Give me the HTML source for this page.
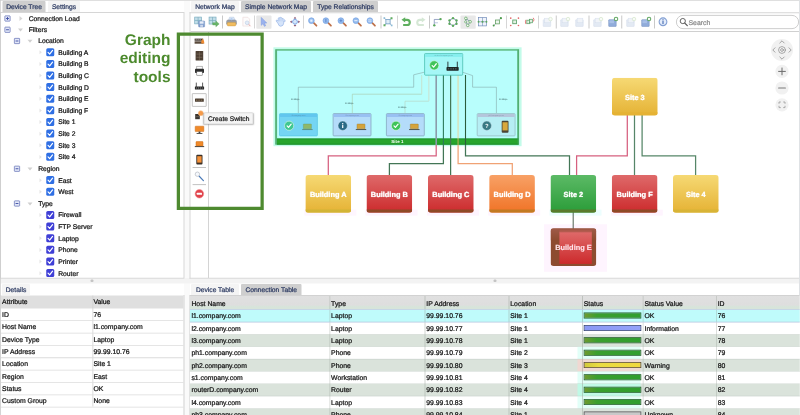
<!DOCTYPE html>
<html lang="en"><head><meta charset="utf-8"><title>Network Monitoring</title>
<style>
html,body{margin:0;padding:0;}
body{width:800px;height:415px;overflow:hidden;background:#fff;position:relative;font-family:"Liberation Sans",sans-serif;font-size:6.7px;color:#151515;text-rendering:geometricPrecision;}
#outer{left:0;top:0;width:3200px;height:1660px;transform:scale(0.25);transform-origin:0 0;filter:blur(1.3px);}
#root{left:0;top:0;width:3200px;height:1660px;overflow:hidden;}
div{position:absolute;box-sizing:border-box;}
.t{height:40px;line-height:40px;white-space:nowrap;font-size:27px;-webkit-text-stroke:0.96px currentColor;}
.tab{height:44px;line-height:45.6px;font-size:26.8px;color:#2a3860;white-space:nowrap;text-align:center;border-radius:4px 4px 0 0;-webkit-text-stroke:0.88px currentColor;}
.tabbg{height:44px;border-radius:4px 4px 0 0;}
.tabbg.g{background:#cecece;}
.tabbg.l{background:#f4f4f4;}
svg{position:absolute;left:0;top:0;overflow:visible;}
.cb{width:32px;height:32px;border-radius:6px;background:#2f6fe4;}
.cb.v{background:#3f3fd6;}
.ex{width:22px;height:22px;border:3.2px solid #5a68b8;border-radius:4px;background:#e4e9fb;}
</style></head><body><div id="outer"><div id="root">

<div style="left:0px;top:0px;width:3200px;height:3.2px;background:#d4d4d4"></div>
<div style="left:736px;top:4px;width:24px;height:1656px;background:#fafafa"></div>
<div style="left:0px;top:1112px;width:3200px;height:22px;background:#f3f3f3"></div>
<div style="left:0px;top:48px;width:738px;height:1066.8px;border:4px solid #d6d6d6;background:#fff"></div>
<div style="left:758px;top:48.8px;width:2442.8px;height:1066px;border:4px solid #d6d6d6;border-right:4px solid #dde0e3;background:#fff"></div>
<div class="tabbg g" style="left:10px;top:4px;width:172px;"></div><div class="tab" style="left:10px;top:4px;width:172px;">Device Tree</div>
<div class="tabbg l" style="left:192px;top:4px;width:128px;"></div><div class="tab" style="left:192px;top:4px;width:128px;">Settings</div>
<div class="tabbg l" style="left:764px;top:4px;width:192px;"></div><div class="tab" style="left:764px;top:4px;width:192px;">Network Map</div>
<div class="tabbg g" style="left:964px;top:4px;width:280px;"></div><div class="tab" style="left:964px;top:4px;width:280px;">Simple Network Map</div>
<div class="tabbg g" style="left:1252px;top:4px;width:260px;"></div><div class="tab" style="left:1252px;top:4px;width:260px;">Type Relationships</div>
<div id="tree" style="left:4px;top:52px;width:732px;height:1058px;overflow:hidden;">
<svg width="24" height="24" viewBox="0 0 5.8 5.8" style="left:14.4px;top:10.4px"><rect x="0.35" y="0.35" width="5.1" height="5.1" rx="0.5" fill="#e3e8f8" stroke="#6472b4" stroke-width="0.7"/><path d="M1.5 2.9H4.3" stroke="#3f4fa6" stroke-width="0.9"/><path d="M2.9 1.5V4.3" stroke="#3f4fa6" stroke-width="0.9"/></svg>
<svg viewBox="0 0 4 5" width="16" height="20" style="left:72px;top:12px"><path d="M0.5 0 L3.5 2.5 L0.5 5Z" fill="#d6d6d6"/></svg>
<div class="t" style="left:110.8px;top:2px;">Connection Load</div>
<svg width="24" height="24" viewBox="0 0 5.8 5.8" style="left:14.4px;top:54.8px"><rect x="0.35" y="0.35" width="5.1" height="5.1" rx="0.5" fill="#e3e8f8" stroke="#6472b4" stroke-width="0.7"/><path d="M1.5 2.9H4.3" stroke="#3f4fa6" stroke-width="0.9"/></svg>
<svg viewBox="0 0 5 4" width="20" height="16" style="left:68px;top:60.4px"><path d="M0 0.5 L5 0.5 L2.5 3.5Z" fill="#d0d0d0"/></svg>
<div class="t" style="left:110.8px;top:46.4px;">Filters</div>
<svg width="24" height="24" viewBox="0 0 5.8 5.8" style="left:52.4px;top:99.6px"><rect x="0.35" y="0.35" width="5.1" height="5.1" rx="0.5" fill="#e3e8f8" stroke="#6472b4" stroke-width="0.7"/><path d="M1.5 2.9H4.3" stroke="#3f4fa6" stroke-width="0.9"/></svg>
<svg viewBox="0 0 5 4" width="20" height="16" style="left:106px;top:105.2px"><path d="M0 0.5 L5 0.5 L2.5 3.5Z" fill="#d0d0d0"/></svg>
<div class="t" style="left:148.8px;top:91.2px;">Location</div>
<svg viewBox="0 0 3 4" width="12" height="16" style="left:152px;top:149.44px"><path d="M0.5 0 L2.8 2 L0.5 4Z" fill="#e4e4e4"/></svg>
<div class="cb" style="left:181.2px;top:141.04px;"><svg width="32" height="32" viewBox="0 0 8 8"><path d="M1.8 4.2 L3.4 5.8 L6.3 2.2" fill="none" stroke="#fff" stroke-width="1.2" stroke-linecap="round" stroke-linejoin="round"/></svg></div>
<div class="t" style="left:228.8px;top:137.44px;">Building A</div>
<svg viewBox="0 0 3 4" width="12" height="16" style="left:152px;top:195.92px"><path d="M0.5 0 L2.8 2 L0.5 4Z" fill="#e4e4e4"/></svg>
<div class="cb" style="left:181.2px;top:187.52px;"><svg width="32" height="32" viewBox="0 0 8 8"><path d="M1.8 4.2 L3.4 5.8 L6.3 2.2" fill="none" stroke="#fff" stroke-width="1.2" stroke-linecap="round" stroke-linejoin="round"/></svg></div>
<div class="t" style="left:228.8px;top:183.92px;">Building B</div>
<svg viewBox="0 0 3 4" width="12" height="16" style="left:152px;top:242.4px"><path d="M0.5 0 L2.8 2 L0.5 4Z" fill="#e4e4e4"/></svg>
<div class="cb" style="left:181.2px;top:234px;"><svg width="32" height="32" viewBox="0 0 8 8"><path d="M1.8 4.2 L3.4 5.8 L6.3 2.2" fill="none" stroke="#fff" stroke-width="1.2" stroke-linecap="round" stroke-linejoin="round"/></svg></div>
<div class="t" style="left:228.8px;top:230.4px;">Building C</div>
<svg viewBox="0 0 3 4" width="12" height="16" style="left:152px;top:288.88px"><path d="M0.5 0 L2.8 2 L0.5 4Z" fill="#e4e4e4"/></svg>
<div class="cb" style="left:181.2px;top:280.48px;"><svg width="32" height="32" viewBox="0 0 8 8"><path d="M1.8 4.2 L3.4 5.8 L6.3 2.2" fill="none" stroke="#fff" stroke-width="1.2" stroke-linecap="round" stroke-linejoin="round"/></svg></div>
<div class="t" style="left:228.8px;top:276.88px;">Building D</div>
<svg viewBox="0 0 3 4" width="12" height="16" style="left:152px;top:335.36px"><path d="M0.5 0 L2.8 2 L0.5 4Z" fill="#e4e4e4"/></svg>
<div class="cb" style="left:181.2px;top:326.96px;"><svg width="32" height="32" viewBox="0 0 8 8"><path d="M1.8 4.2 L3.4 5.8 L6.3 2.2" fill="none" stroke="#fff" stroke-width="1.2" stroke-linecap="round" stroke-linejoin="round"/></svg></div>
<div class="t" style="left:228.8px;top:323.36px;">Building E</div>
<svg viewBox="0 0 3 4" width="12" height="16" style="left:152px;top:381.84px"><path d="M0.5 0 L2.8 2 L0.5 4Z" fill="#e4e4e4"/></svg>
<div class="cb" style="left:181.2px;top:373.44px;"><svg width="32" height="32" viewBox="0 0 8 8"><path d="M1.8 4.2 L3.4 5.8 L6.3 2.2" fill="none" stroke="#fff" stroke-width="1.2" stroke-linecap="round" stroke-linejoin="round"/></svg></div>
<div class="t" style="left:228.8px;top:369.84px;">Building F</div>
<svg viewBox="0 0 3 4" width="12" height="16" style="left:152px;top:428.32px"><path d="M0.5 0 L2.8 2 L0.5 4Z" fill="#e4e4e4"/></svg>
<div class="cb" style="left:181.2px;top:419.92px;"><svg width="32" height="32" viewBox="0 0 8 8"><path d="M1.8 4.2 L3.4 5.8 L6.3 2.2" fill="none" stroke="#fff" stroke-width="1.2" stroke-linecap="round" stroke-linejoin="round"/></svg></div>
<div class="t" style="left:228.8px;top:416.32px;">Site 1</div>
<svg viewBox="0 0 3 4" width="12" height="16" style="left:152px;top:474.8px"><path d="M0.5 0 L2.8 2 L0.5 4Z" fill="#e4e4e4"/></svg>
<div class="cb" style="left:181.2px;top:466.4px;"><svg width="32" height="32" viewBox="0 0 8 8"><path d="M1.8 4.2 L3.4 5.8 L6.3 2.2" fill="none" stroke="#fff" stroke-width="1.2" stroke-linecap="round" stroke-linejoin="round"/></svg></div>
<div class="t" style="left:228.8px;top:462.8px;">Site 2</div>
<svg viewBox="0 0 3 4" width="12" height="16" style="left:152px;top:521.28px"><path d="M0.5 0 L2.8 2 L0.5 4Z" fill="#e4e4e4"/></svg>
<div class="cb" style="left:181.2px;top:512.88px;"><svg width="32" height="32" viewBox="0 0 8 8"><path d="M1.8 4.2 L3.4 5.8 L6.3 2.2" fill="none" stroke="#fff" stroke-width="1.2" stroke-linecap="round" stroke-linejoin="round"/></svg></div>
<div class="t" style="left:228.8px;top:509.28px;">Site 3</div>
<svg viewBox="0 0 3 4" width="12" height="16" style="left:152px;top:567.76px"><path d="M0.5 0 L2.8 2 L0.5 4Z" fill="#e4e4e4"/></svg>
<div class="cb" style="left:181.2px;top:559.36px;"><svg width="32" height="32" viewBox="0 0 8 8"><path d="M1.8 4.2 L3.4 5.8 L6.3 2.2" fill="none" stroke="#fff" stroke-width="1.2" stroke-linecap="round" stroke-linejoin="round"/></svg></div>
<div class="t" style="left:228.8px;top:555.76px;">Site 4</div>
<svg width="24" height="24" viewBox="0 0 5.8 5.8" style="left:52.4px;top:610.64px"><rect x="0.35" y="0.35" width="5.1" height="5.1" rx="0.5" fill="#e3e8f8" stroke="#6472b4" stroke-width="0.7"/><path d="M1.5 2.9H4.3" stroke="#3f4fa6" stroke-width="0.9"/></svg>
<svg viewBox="0 0 5 4" width="20" height="16" style="left:106px;top:616.24px"><path d="M0 0.5 L5 0.5 L2.5 3.5Z" fill="#d0d0d0"/></svg>
<div class="t" style="left:148.8px;top:602.24px;">Region</div>
<svg viewBox="0 0 3 4" width="12" height="16" style="left:152px;top:660.72px"><path d="M0.5 0 L2.8 2 L0.5 4Z" fill="#e4e4e4"/></svg>
<div class="cb" style="left:181.2px;top:652.32px;"><svg width="32" height="32" viewBox="0 0 8 8"><path d="M1.8 4.2 L3.4 5.8 L6.3 2.2" fill="none" stroke="#fff" stroke-width="1.2" stroke-linecap="round" stroke-linejoin="round"/></svg></div>
<div class="t" style="left:228.8px;top:648.72px;">East</div>
<svg viewBox="0 0 3 4" width="12" height="16" style="left:152px;top:707.2px"><path d="M0.5 0 L2.8 2 L0.5 4Z" fill="#e4e4e4"/></svg>
<div class="cb" style="left:181.2px;top:698.8px;"><svg width="32" height="32" viewBox="0 0 8 8"><path d="M1.8 4.2 L3.4 5.8 L6.3 2.2" fill="none" stroke="#fff" stroke-width="1.2" stroke-linecap="round" stroke-linejoin="round"/></svg></div>
<div class="t" style="left:228.8px;top:695.2px;">West</div>
<svg width="24" height="24" viewBox="0 0 5.8 5.8" style="left:52.4px;top:750.08px"><rect x="0.35" y="0.35" width="5.1" height="5.1" rx="0.5" fill="#e3e8f8" stroke="#6472b4" stroke-width="0.7"/><path d="M1.5 2.9H4.3" stroke="#3f4fa6" stroke-width="0.9"/></svg>
<svg viewBox="0 0 5 4" width="20" height="16" style="left:106px;top:755.68px"><path d="M0 0.5 L5 0.5 L2.5 3.5Z" fill="#d0d0d0"/></svg>
<div class="t" style="left:148.8px;top:741.68px;">Type</div>
<svg viewBox="0 0 3 4" width="12" height="16" style="left:152px;top:800.16px"><path d="M0.5 0 L2.8 2 L0.5 4Z" fill="#e4e4e4"/></svg>
<div class="cb v" style="left:181.2px;top:791.76px;"><svg width="32" height="32" viewBox="0 0 8 8"><path d="M1.8 4.2 L3.4 5.8 L6.3 2.2" fill="none" stroke="#fff" stroke-width="1.2" stroke-linecap="round" stroke-linejoin="round"/></svg></div>
<div class="t" style="left:228.8px;top:788.16px;">Firewall</div>
<svg viewBox="0 0 3 4" width="12" height="16" style="left:152px;top:846.64px"><path d="M0.5 0 L2.8 2 L0.5 4Z" fill="#e4e4e4"/></svg>
<div class="cb v" style="left:181.2px;top:838.24px;"><svg width="32" height="32" viewBox="0 0 8 8"><path d="M1.8 4.2 L3.4 5.8 L6.3 2.2" fill="none" stroke="#fff" stroke-width="1.2" stroke-linecap="round" stroke-linejoin="round"/></svg></div>
<div class="t" style="left:228.8px;top:834.64px;">FTP Server</div>
<svg viewBox="0 0 3 4" width="12" height="16" style="left:152px;top:893.12px"><path d="M0.5 0 L2.8 2 L0.5 4Z" fill="#e4e4e4"/></svg>
<div class="cb v" style="left:181.2px;top:884.72px;"><svg width="32" height="32" viewBox="0 0 8 8"><path d="M1.8 4.2 L3.4 5.8 L6.3 2.2" fill="none" stroke="#fff" stroke-width="1.2" stroke-linecap="round" stroke-linejoin="round"/></svg></div>
<div class="t" style="left:228.8px;top:881.12px;">Laptop</div>
<svg viewBox="0 0 3 4" width="12" height="16" style="left:152px;top:939.6px"><path d="M0.5 0 L2.8 2 L0.5 4Z" fill="#e4e4e4"/></svg>
<div class="cb v" style="left:181.2px;top:931.2px;"><svg width="32" height="32" viewBox="0 0 8 8"><path d="M1.8 4.2 L3.4 5.8 L6.3 2.2" fill="none" stroke="#fff" stroke-width="1.2" stroke-linecap="round" stroke-linejoin="round"/></svg></div>
<div class="t" style="left:228.8px;top:927.6px;">Phone</div>
<svg viewBox="0 0 3 4" width="12" height="16" style="left:152px;top:986.08px"><path d="M0.5 0 L2.8 2 L0.5 4Z" fill="#e4e4e4"/></svg>
<div class="cb v" style="left:181.2px;top:977.68px;"><svg width="32" height="32" viewBox="0 0 8 8"><path d="M1.8 4.2 L3.4 5.8 L6.3 2.2" fill="none" stroke="#fff" stroke-width="1.2" stroke-linecap="round" stroke-linejoin="round"/></svg></div>
<div class="t" style="left:228.8px;top:974.08px;">Printer</div>
<svg viewBox="0 0 3 4" width="12" height="16" style="left:152px;top:1032.56px"><path d="M0.5 0 L2.8 2 L0.5 4Z" fill="#e4e4e4"/></svg>
<div class="cb v" style="left:181.2px;top:1024.16px;"><svg width="32" height="32" viewBox="0 0 8 8"><path d="M1.8 4.2 L3.4 5.8 L6.3 2.2" fill="none" stroke="#fff" stroke-width="1.2" stroke-linecap="round" stroke-linejoin="round"/></svg></div>
<div class="t" style="left:228.8px;top:1020.56px;">Router</div>
</div>
<div style="left:0.8px;top:0px;width:3.2px;height:1660px;background:#cdcdcd"></div>
<div style="left:3196.4px;top:0px;width:3.6px;height:1180px;background:#dfe2e5"></div>
<div style="left:362px;top:1118px;width:12px;height:10px;background:#c4c4c4;border-radius:4px"></div>
<div style="left:1974px;top:1118px;width:12px;height:10px;background:#c4c4c4;border-radius:4px"></div>
<div style="left:400px;top:121.2px;width:282px;text-align:right;font-weight:bold;font-size:62px;line-height:74.8px;color:#4c8a2d;">Graph<br>editing<br>tools</div>
<div style="left:762px;top:124px;width:2433.6px;height:3.6px;background:#d0d0d0"></div>
<div style="left:888px;top:62px;width:3.6px;height:52px;background:#c9c9c9"></div>
<div style="left:1015.6px;top:62px;width:3.6px;height:52px;background:#c9c9c9"></div>
<div style="left:1212.8px;top:62px;width:3.6px;height:52px;background:#c9c9c9"></div>
<div style="left:1522.4px;top:62px;width:3.6px;height:52px;background:#c9c9c9"></div>
<div style="left:1588.8px;top:62px;width:3.6px;height:52px;background:#c9c9c9"></div>
<div style="left:1716.4px;top:62px;width:3.6px;height:52px;background:#c9c9c9"></div>
<div style="left:2024.8px;top:62px;width:3.6px;height:52px;background:#c9c9c9"></div>
<div style="left:2152.8px;top:62px;width:3.6px;height:52px;background:#c9c9c9"></div>
<div style="left:2223.2px;top:62px;width:3.6px;height:52px;background:#c9c9c9"></div>
<div style="left:2354.4px;top:62px;width:3.6px;height:52px;background:#c9c9c9"></div>
<div style="left:2485.4px;top:62px;width:3.6px;height:52px;background:#c9c9c9"></div>
<div style="left:2616.4px;top:62px;width:3.6px;height:52px;background:#c9c9c9"></div>
<div style="left:1024.8px;top:62.4px;width:61.6px;height:52.8px;background:#e8e8e8;border-radius:4px"></div>
<div style="left:1842.4px;top:62.4px;width:60.8px;height:52.8px;background:#e8e8e8;border-radius:4px"></div>
<svg id="tbicons" width="3200" height="128" viewBox="0 0 800 32" opacity="0.86">
<g transform="translate(194.34,16.7) scale(0.92)"><rect x="0.4" y="0.4" width="7.4" height="7.4" fill="#b9d9e6" stroke="#5f9bb0" stroke-width="0.7"/><path d="M0.4 4.1H7.8M4.1 0.4V7.8" stroke="#5f9bb0" stroke-width="0.7"/><rect x="4.6" y="4.6" width="6.6" height="6.6" rx="0.7" fill="#7092c8" stroke="#5577b0" stroke-width="0.5"/><rect x="5.8" y="5" width="4.2" height="2.6" fill="#e4ecf8"/><rect x="6.4" y="8.8" width="3" height="2.2" fill="#c4d2ea"/></g>
<g transform="translate(208.69,16.7) scale(0.92)"><rect x="0.4" y="0.4" width="7.6" height="7.6" fill="#b9d9e6" stroke="#5f9bb0" stroke-width="0.7"/><path d="M0.4 4.2H8M4.2 0.4V8" stroke="#5f9bb0" stroke-width="0.7"/><path d="M4.4 6.6H7.8V4.6L11.4 7.8L7.8 11V9H4.4Z" fill="#52aa52" stroke="#3c8c3c" stroke-width="0.4"/></g>
<g transform="translate(226.19,16.7) scale(0.92)"><path d="M2.6 3.8L3.6 0.6H8.4L9.4 3.8Z" fill="#dbe8f8" stroke="#9ab2d6" stroke-width="0.5"/><path d="M0.4 5.4Q0.4 3.6 2 3.6H9.8Q11.2 3.6 11.2 5.4V8.2H0.4Z" fill="#8b8f98" stroke="#6f737c" stroke-width="0.5"/><rect x="1.2" y="6.2" width="9.2" height="3.8" rx="0.8" fill="#f0b244" stroke="#c48a26" stroke-width="0.5"/><circle cx="5.8" cy="2.6" r="1.3" fill="#a9c6ee"/></g>
<g transform="translate(241.19,16.7) scale(0.92)"><path d="M1.8 0.6H7.2L9.2 2.6V10.2H1.8Z" fill="#fdfbfb" stroke="#e6cccc" stroke-width="0.6"/><circle cx="6.4" cy="6.6" r="2" fill="#dfeaf8" stroke="#b4c6e0" stroke-width="0.7"/><path d="M8 8.2L10.2 10.4" stroke="#e09a9a" stroke-width="1"/></g>
<g transform="translate(257.94,16.7) scale(0.92)"><path d="M3.6 0.8V9.4L5.6 7.5L7 10.5L8.4 9.8L7 6.9H9.6Z" fill="#8eaaf0" stroke="#6c8de0" stroke-width="0.6" stroke-linejoin="round"/></g>
<g transform="translate(275.44,16.7) scale(0.92)"><path d="M2.6 7L0.8 4.8Q0.4 3.8 1.6 3.7L3 4.9V1.7Q3.7 0.8 4.4 1.7V1Q5.2 0.2 5.9 1V1.4Q6.7 0.7 7.4 1.5V2.3Q8.3 1.7 8.9 2.6L10.6 4.2Q11 5 10.2 5.3L9 4.6V7Q8.8 10 5.8 10.4Q3.4 10.2 2.6 7Z" fill="#cfe0fa" stroke="#7fa2e0" stroke-width="0.7" stroke-linejoin="round"/><path d="M4.4 2V5M5.9 1.6V5M7.4 2.2V5" stroke="#9ab6ea" stroke-width="0.5"/></g>
<g transform="translate(289.94,16.7) scale(0.92)"><path d="M5.5 1.5V9.5M1.5 5.5H9.5" stroke="#6f9ae0" stroke-width="1"/><circle cx="5.5" cy="5.5" r="2.6" fill="#cfe2fa" stroke="#5f92dc" stroke-width="0.9"/><path d="M5.5 0L7 2H4ZM5.5 11L7 9H4ZM0 5.5L2 4V7ZM11 5.5L9 4V7Z" fill="#7a3a58"/></g>
<g transform="translate(307.44,16.7) scale(0.92)"><path d="M6.8 6.8L9.8 9.8" stroke="#b45a2c" stroke-width="1.9" stroke-linecap="round"/><circle cx="4.3" cy="4.3" r="3.1" fill="#86b2ec" stroke="#5b90dc" stroke-width="0.7"/><rect x="3.1" y="3.1" width="2.4" height="2.4" fill="#e2eefc"/></g>
<g transform="translate(321.94,16.7) scale(0.92)"><path d="M6.8 6.8L9.8 9.8" stroke="#b45a2c" stroke-width="1.9" stroke-linecap="round"/><circle cx="4.3" cy="4.3" r="3.1" fill="#86b2ec" stroke="#5b90dc" stroke-width="0.7"/><rect x="3.8" y="2.4" width="1" height="3.8" fill="#3f6fc0"/></g>
<g transform="translate(336.94,16.7) scale(0.92)"><path d="M6.8 6.8L9.8 9.8" stroke="#b45a2c" stroke-width="1.9" stroke-linecap="round"/><circle cx="4.3" cy="4.3" r="3.1" fill="#86b2ec" stroke="#5b90dc" stroke-width="0.7"/><path d="M2.8 4.3H5.8M4.3 2.8V5.8" stroke="#3f6fc0" stroke-width="0.9"/></g>
<g transform="translate(351.94,16.7) scale(0.92)"><path d="M6.8 6.8L9.8 9.8" stroke="#b45a2c" stroke-width="1.9" stroke-linecap="round"/><circle cx="4.3" cy="4.3" r="3.1" fill="#86b2ec" stroke="#5b90dc" stroke-width="0.7"/><path d="M2.6 4.3H6" stroke="#e6effd" stroke-width="1.1"/></g>
<g transform="translate(365.94,16.7) scale(0.92)"><path d="M6.8 6.8L9.8 9.8" stroke="#b45a2c" stroke-width="1.9" stroke-linecap="round"/><circle cx="4.3" cy="4.3" r="3.1" fill="#86b2ec" stroke="#5b90dc" stroke-width="0.7"/><path d="M2.4 3.4H6.2M2.4 5.2H6.2M3.4 2.4V6.2M5.2 2.4V6.2" stroke="#d6e4fb" stroke-width="0.5"/></g>
<g transform="translate(382.94,16.7) scale(0.92)"><path d="M1.2 9.8L9.8 1.2M1.2 1.2L9.8 9.8" stroke="#5f8fb8" stroke-width="0.8"/><rect x="3.2" y="3.2" width="4.6" height="4.6" fill="#dcebf6" stroke="#4f86b4" stroke-width="0.8"/><rect x="8.2" y="0.6" width="2.2" height="2.2" fill="#46a046"/><rect x="0.6" y="8.2" width="2.2" height="2.2" fill="#46a046"/><rect x="0.6" y="0.6" width="1.8" height="1.8" fill="#7ab0d0"/><rect x="8.6" y="8.6" width="1.8" height="1.8" fill="#7ab0d0"/></g>
<g transform="translate(400.94,16.7) scale(0.92)"><path d="M3.4 3.4H6.6Q9.6 3.4 9.6 6.2Q9.6 9 6.6 9H2.4" fill="none" stroke="#45a345" stroke-width="2.3" stroke-linejoin="round"/><path d="M4.6 0.6L0.6 3.4L4.6 6.2Z" fill="#45a345"/></g>
<g transform="translate(415.94,16.7) scale(0.92)"><path d="M7.6 3.4H4.4Q1.4 3.4 1.4 6.2Q1.4 9 4.4 9H8.6" fill="none" stroke="#cfe4cf" stroke-width="2.3" stroke-linejoin="round"/><path d="M6.4 0.6L10.4 3.4L6.4 6.2Z" fill="#cfe4cf"/></g>
<g transform="translate(432.44,16.7) scale(0.92)"><path d="M2 9.5V3H8.3" fill="none" stroke="#4a5f9a" stroke-width="0.7"/><path d="M2 6.6H6" stroke="#8a9ac4" stroke-width="0.7"/><circle cx="8.8" cy="2.6" r="1.3" fill="#3f9a3f"/><circle cx="2" cy="9.4" r="1.3" fill="#3f9a3f"/></g>
<g transform="translate(447.94,16.7) scale(0.92)"><path d="M5.5 1.6L9.3 4V7.6L5.5 9.8L1.7 7.6V4Z" fill="none" stroke="#4a5f9a" stroke-width="0.8"/><circle cx="5.5" cy="1.6" r="1.3" fill="#3f9a3f"/><circle cx="9.3" cy="4" r="1.3" fill="#3f9a3f"/><circle cx="9.3" cy="7.6" r="1.3" fill="#3f9a3f"/><circle cx="5.5" cy="9.8" r="1.3" fill="#3f9a3f"/><circle cx="1.7" cy="7.6" r="1.3" fill="#3f9a3f"/><circle cx="1.7" cy="4" r="1.3" fill="#3f9a3f"/></g>
<g transform="translate(462.94,16.7) scale(0.92)"><path d="M3.2 1.8L7.8 5.5L5.2 9.4L3.2 5.6Z" fill="none" stroke="#4a5f9a" stroke-width="0.7"/><circle cx="3.2" cy="1.8" r="1.4" fill="#fff" stroke="#3f9a3f" stroke-width="0.8"/><circle cx="7.8" cy="5.5" r="1.4" fill="#fff" stroke="#3f9a3f" stroke-width="0.8"/><circle cx="5.2" cy="9.4" r="1.4" fill="#fff" stroke="#3f9a3f" stroke-width="0.8"/><circle cx="3" cy="5.6" r="1.2" fill="#fff" stroke="#3f9a3f" stroke-width="0.7"/></g>
<g transform="translate(477.44,16.7) scale(0.92)"><rect x="1" y="1" width="9" height="9" fill="#eef3fb" stroke="#4f6fa8" stroke-width="0.7"/><path d="M1 5.5H10M5.5 1V10" stroke="#4f6fa8" stroke-width="0.6"/><circle cx="5.5" cy="5.5" r="1.2" fill="#3f9a3f"/><circle cx="1.2" cy="5.5" r="1" fill="#3f9a3f"/><circle cx="9.8" cy="5.5" r="1" fill="#3f9a3f"/></g>
<g transform="translate(492.44,16.7) scale(0.92)"><path d="M1.5 9.5L8.5 2" stroke="#7a8ab0" stroke-width="0.6"/><rect x="3.4" y="3.6" width="4.2" height="4.2" fill="#e9f3e9" stroke="#3f8a3f" stroke-width="0.8"/><circle cx="9.2" cy="1.6" r="1.2" fill="#2f8a2f"/><circle cx="1.4" cy="9.6" r="1.1" fill="#2f8a2f"/></g>
<g transform="translate(509.44,16.7) scale(0.92)"><rect x="3.6" y="3.6" width="4" height="4" fill="#dff0df" stroke="#3f8f4f" stroke-width="0.9"/><g fill="#dc4a4a"><circle cx="1.4" cy="1.6" r="0.9"/><circle cx="9.8" cy="1.6" r="0.9"/><circle cx="1.4" cy="9.6" r="0.9"/><circle cx="9.8" cy="9.6" r="0.9"/></g></g>
<g transform="translate(524.44,16.7) scale(0.92)"><rect x="2.6" y="3.8" width="3.4" height="3.8" fill="#dff0df" stroke="#3f8f4f" stroke-width="0.8"/><rect x="5.4" y="2.8" width="3.2" height="3.8" fill="#dff0df" stroke="#3f8f4f" stroke-width="0.8"/><path d="M1.6 3.4Q0.4 5.6 1.6 8M9.6 1.2Q11 3 9.8 5.2" fill="none" stroke="#dc4a4a" stroke-width="0.9"/></g>
<g transform="translate(542.44,16.7) scale(0.92)"><rect x="0.8" y="3.2" width="8.2" height="7.4" rx="0.6" fill="#dfe7f3" stroke="#cdd7e8" stroke-width="0.6"/><rect x="2.4" y="1.6" width="6.2" height="5" fill="#eef2f8" stroke="#cdd7e8" stroke-width="0.5"/><circle cx="8.8" cy="2.6" r="1.9" fill="#f8fbf6" stroke="#cfe2c4" stroke-width="0.8"/></g>
<g transform="translate(559.94,16.7) scale(0.92)"><rect x="0.8" y="3.2" width="8.2" height="7.4" rx="0.6" fill="#dfe7f3" stroke="#cdd7e8" stroke-width="0.6"/><rect x="2.4" y="1.6" width="6.2" height="5" fill="#eef2f8" stroke="#cdd7e8" stroke-width="0.5"/><circle cx="8.8" cy="2.6" r="1.9" fill="#f8fbf6" stroke="#cfe2c4" stroke-width="0.8"/></g>
<g transform="translate(574.94,16.7) scale(0.92)"><rect x="0.8" y="3.2" width="8.2" height="7.4" rx="0.6" fill="#dfe7f3" stroke="#cdd7e8" stroke-width="0.6"/><rect x="2.4" y="1.6" width="6.2" height="5" fill="#eef2f8" stroke="#cdd7e8" stroke-width="0.5"/></g>
<g transform="translate(592.94,16.7) scale(0.92)"><rect x="0.8" y="3.2" width="8.2" height="7.4" rx="0.6" fill="#dfe7f3" stroke="#cdd7e8" stroke-width="0.6"/><rect x="2.4" y="1.6" width="6.2" height="5" fill="#eef2f8" stroke="#cdd7e8" stroke-width="0.5"/><circle cx="8.8" cy="2.6" r="1.9" fill="#f8fbf6" stroke="#cfe2c4" stroke-width="0.8"/></g>
<g transform="translate(607.94,16.7) scale(0.92)"><rect x="0.8" y="3.2" width="8.2" height="7.4" rx="0.6" fill="#7f9fd6" stroke="#6484b6" stroke-width="0.6"/><rect x="1.6" y="4" width="5" height="3" fill="#9ab6e4"/><circle cx="8.8" cy="2.6" r="1.9" fill="#f4faf4" stroke="#4a9a4a" stroke-width="1.1"/></g>
<g transform="translate(625.94,16.7) scale(0.92)"><rect x="0.8" y="3.2" width="8.2" height="7.4" rx="0.6" fill="#dfe7f3" stroke="#cdd7e8" stroke-width="0.6"/><rect x="2.4" y="1.6" width="6.2" height="5" fill="#eef2f8" stroke="#cdd7e8" stroke-width="0.5"/><circle cx="8.8" cy="2.6" r="1.9" fill="#f8fbf6" stroke="#cfe2c4" stroke-width="0.8"/></g>
<g transform="translate(640.94,16.7) scale(0.92)"><rect x="0.8" y="3.2" width="8.2" height="7.4" rx="0.6" fill="#7f9fd6" stroke="#6484b6" stroke-width="0.6"/><rect x="1.6" y="4" width="5" height="3" fill="#9ab6e4"/><circle cx="8.8" cy="2.6" r="1.9" fill="#f4faf4" stroke="#4a9a4a" stroke-width="1.1"/></g>
<g transform="translate(657.94,16.7) scale(0.92)"><circle cx="5.5" cy="5.5" r="4.2" fill="#dfe9fa" stroke="#6f90cc" stroke-width="1.2"/><rect x="4.8" y="4.7" width="1.4" height="3.3" fill="#3f66b0"/><rect x="4.8" y="2.8" width="1.4" height="1.3" fill="#3f66b0"/></g>
</svg>
<div style="left:2704px;top:60.4px;width:491.6px;height:55.6px;border:3.6px solid #bdbdbd;border-radius:28px;background:#fff;"></div>
<svg width="40" height="40" style="left:2716px;top:69.2px" viewBox="0 0 10 10"><circle cx="3.8" cy="3.8" r="2.6" fill="none" stroke="#555" stroke-width="0.9"/><path d="M5.8 5.8L8.3 8.3" stroke="#555" stroke-width="1.2" stroke-linecap="round"/></svg>
<div class="t" style="left:2754px;top:68.8px;color:#8c8c8c;font-size:27.6px">Search</div>
<div style="left:832px;top:128px;width:4px;height:984px;background:#d4d4d4"></div>
<svg id="palette" width="3200" height="1660" viewBox="0 0 800 415">
<g><rect x="194.6" y="38.6" width="8.6" height="2.2" fill="#4a4038"/><rect x="194.6" y="41.3" width="9" height="2.4" fill="#5a4a3c"/><path d="M201.2 43.6Q201 40.6 202.6 38.4Q204.6 41 204.4 43.6Z" fill="#f08a30"/><path d="M195.6 39.7h1.2m0.8 0h1.2m0.8 0h1.2" stroke="#b9b0a6" stroke-width="0.7"/></g>
<g><rect x="195.6" y="51" width="7.6" height="9.6" rx="0.5" fill="#4d3f33"/><path d="M196.4 54.1H202.4M196.4 57.3H202.4M199.4 51.6V60" stroke="#8a7a68" stroke-width="0.5"/></g>
<g><rect x="196.8" y="66.2" width="5.4" height="3" fill="#fff" stroke="#777" stroke-width="0.5"/><rect x="195" y="68.8" width="9" height="4.2" rx="0.8" fill="#2d2d2d"/><rect x="196.8" y="71.6" width="5.4" height="3.6" fill="#fff" stroke="#555" stroke-width="0.5"/></g>
<g><path d="M196.3 82.6V87.4M202.6 82.6V87.4" stroke="#333" stroke-width="0.8"/><rect x="194.9" y="86.6" width="9.2" height="2.8" rx="0.5" fill="#2b2b2b"/><path d="M196 88h1m1 0h1m1 0h1m1 0h0.8" stroke="#ddd" stroke-width="0.5"/></g>
<rect x="192.3" y="93.6" width="13.9" height="12.8" rx="0.3" fill="#fdfdfd" stroke="#adadad" stroke-width="0.7"/>
<g><rect x="195" y="98.6" width="8.8" height="3.2" rx="0.4" fill="#4b3d30"/><path d="M196 100.2h1.4m1 0h1.4m1 0h1.4" stroke="#a08a6c" stroke-width="0.8"/></g>
<g><rect x="195.2" y="114" width="4.6" height="5.2" fill="#3b3631"/><path d="M195.8 116.6H199.2" stroke="#8a8178" stroke-width="0.5"/><circle cx="200.8" cy="113.2" r="2.5" fill="#f59a4a" stroke="#f7c08a" stroke-width="0.6"/></g>
<g><rect x="195.2" y="126.2" width="8.6" height="5.4" rx="0.5" fill="#f08a2a" stroke="#c86a16" stroke-width="0.5"/><rect x="198.6" y="131.6" width="1.8" height="1.6" fill="#444"/><rect x="196.6" y="133" width="5.8" height="0.9" fill="#444"/></g>
<g><rect x="196" y="141.6" width="7" height="4.4" rx="0.4" fill="#f08a2a" stroke="#c86a16" stroke-width="0.5"/><path d="M194.8 146.6H204.2" stroke="#4a4038" stroke-width="1"/></g>
<g><rect x="196.3" y="154.8" width="6.2" height="9.6" rx="1" fill="#3a3028"/><rect x="197.2" y="156.2" width="4.4" height="6.4" fill="#f5923a"/></g>
<path d="M192.6 167.5H206" stroke="#a8a8a8" stroke-width="0.7"/>
<g><path d="M199 176L203.4 180.6" stroke="#4a7ab8" stroke-width="1.2" stroke-linecap="round"/><circle cx="197.4" cy="174.2" r="2.2" fill="#f6f9fd" stroke="#b4b9c2" stroke-width="0.7"/></g>
<path d="M192.6 184.6H206" stroke="#a8a8a8" stroke-width="0.7"/>
<g><circle cx="199.4" cy="193.8" r="4.3" fill="#e0434b"/><circle cx="199.4" cy="193.8" r="4.3" fill="none" stroke="#f08a90" stroke-width="0.5"/><rect x="196.8" y="192.8" width="5.2" height="2" rx="0.4" fill="#fff"/></g>
</svg>
<svg id="graph" width="3200" height="1660" viewBox="0 0 800 415" font-family="Liberation Sans, sans-serif">
<defs>
<linearGradient id="gy" x1="0" y1="0" x2="0" y2="1"><stop offset="0" stop-color="#f6d974"/><stop offset="1" stop-color="#e5b234"/></linearGradient>
<linearGradient id="gr" x1="0" y1="0" x2="0" y2="1"><stop offset="0" stop-color="#df6a6a"/><stop offset="1" stop-color="#cc2a2c"/></linearGradient>
<linearGradient id="go" x1="0" y1="0" x2="0" y2="1"><stop offset="0" stop-color="#f8a166"/><stop offset="1" stop-color="#f07326"/></linearGradient>
<linearGradient id="gg" x1="0" y1="0" x2="0" y2="1"><stop offset="0" stop-color="#5cba66"/><stop offset="1" stop-color="#2a9c38"/></linearGradient>
<linearGradient id="gbe" x1="0" y1="0" x2="0" y2="1"><stop offset="0" stop-color="#a05a48"/><stop offset="1" stop-color="#8d4b30"/></linearGradient>
<linearGradient id="gbe2" x1="0" y1="0" x2="0" y2="1"><stop offset="0" stop-color="#a8584c"/><stop offset="1" stop-color="#d85a5c"/></linearGradient>
<clipPath id="cpn"><rect x="0" y="0" width="45.7" height="37.8" rx="3"/></clipPath>
</defs>
<rect x="273.4" y="47.3" width="248.2" height="98.9" fill="#c3fbe9"/>
<rect x="276.2" y="49.9" width="242" height="93.9" fill="#b8fefc" stroke="#6cc490" stroke-width="1.8"/>
<rect x="276.9" y="138.6" width="241.6" height="5.9" fill="#27a52c"/>
<path d="M276.9 138.9H518.5M276.9 144.2H518.5" stroke="#1c8a2a" stroke-width="0.8"/>
<path d="M276 49.8V144.4M518.2 49.8V144.4" stroke="#3f9f5c" stroke-width="1.6" opacity="0.55"/>
<text x="397.4" y="143.1" font-size="4.4" font-weight="bold" fill="#fff" text-anchor="middle" letter-spacing="0.12">Site 1</text>
<path d="M298.3 113V87.2H413.7V74.8L424.3 72.2" fill="none" stroke="#7c9a9a" stroke-width="0.5"/>
<path d="M352.3 113V94.2H421.6V75.4" stroke="#a7c9a7" stroke-width="0.6" fill="none"/>
<path d="M405 113V101.2H428.7V75.4" stroke="#b7d2c0" stroke-width="0.6" fill="none"/>
<path d="M462.5 72.2L472.6 75.6V87.2H496.4V113" fill="none" stroke="#7c9a9a" stroke-width="0.5"/>
<text x="291" y="100.2" font-size="2.2" fill="#355" >10 Mbps</text>
<text x="345" y="103.8" font-size="2.2" fill="#355" >10 Mbps</text>
<text x="398" y="107.6" font-size="2.2" fill="#355" >10 Mbps</text>
<text x="499" y="100.2" font-size="2.2" fill="#355" >10 Mbps</text>
<rect x="304.4" y="209.6" width="52" height="6" fill="#fef6fe"/>
<rect x="365.5" y="209.6" width="52" height="6" fill="#fef4fe"/>
<rect x="427" y="209.6" width="52" height="6" fill="#fef4fe"/>
<rect x="488.2" y="209.6" width="52" height="6" fill="#fef4fe"/>
<rect x="549.5" y="209.6" width="52" height="6" fill="#ecfefe"/>
<rect x="610.8" y="209.6" width="52" height="6" fill="#fef4fe"/>
<rect x="544" y="224.3" width="63" height="47.5" fill="#fef4fe"/>
<path d="M436.2 145V155.9H328.3V175" fill="none" stroke="#d6607f" stroke-width="1.25" stroke-linejoin="miter"/>
<path d="M443.4 145V163.5H389.4V175" fill="none" stroke="#437656" stroke-width="1.25" stroke-linejoin="miter"/>
<path d="M450.6 75V175" fill="none" stroke="#437656" stroke-width="1.25" stroke-linejoin="miter"/>
<path d="M458.1 145V163.5H512.3V175" fill="none" stroke="#f0a274" stroke-width="1.25" stroke-linejoin="miter"/>
<path d="M465.5 145V155.9H569.5V175" fill="none" stroke="#437656" stroke-width="1.25" stroke-linejoin="miter"/>
<path d="M436.2 75V145" fill="none" stroke="#8b9cab" stroke-width="1.6" stroke-linejoin="miter"/>
<path d="M443.4 75V145" fill="none" stroke="#2c7a5a" stroke-width="1.1" stroke-linejoin="miter"/>
<path d="M458.1 75V138.6" fill="none" stroke="#d3e6c4" stroke-width="1.7" stroke-linejoin="miter"/>
<path d="M458.1 138.6V145" fill="none" stroke="#8fae4a" stroke-width="1.5" stroke-linejoin="miter"/>
<path d="M465.5 75V145" fill="none" stroke="#2a5c3c" stroke-width="1.1" stroke-linejoin="miter"/>
<path d="M421.8 76V94" fill="none" stroke="#cfeee0" stroke-width="0.9" stroke-linejoin="miter"/>
<path d="M428.9 76V101" fill="none" stroke="#cfeee0" stroke-width="0.9" stroke-linejoin="miter"/>
<path d="M627.3 115V155.9H576.6V175" fill="none" stroke="#d6607f" stroke-width="1.25" stroke-linejoin="miter"/>
<path d="M634.5 115V175" fill="none" stroke="#568668" stroke-width="1.25" stroke-linejoin="miter"/>
<path d="M642.1 115V155.9H695.6V175" fill="none" stroke="#568668" stroke-width="1.25" stroke-linejoin="miter"/>
<path d="M573.2 212V230" fill="none" stroke="#5f6f62" stroke-width="1.1" stroke-linejoin="miter"/>
<rect x="424.6" y="53.5" width="38.1" height="21.7" rx="0.8" fill="#a4f7f7" stroke="#3fb8a8" stroke-width="0.7"/>
<rect x="425.0" y="53.9" width="37.300000000000004" height="3" fill="#86eeee"/>
<text x="443.65000000000003" y="56.1" font-size="1.9" fill="#456" opacity="0.45" text-anchor="middle">routerA.company.com</text>
<circle cx="434.20000000000005" cy="65.35" r="4.6" fill="#3fc45a" stroke="#d8f8e0" stroke-width="0.6"/><path d="M432.20000000000005 65.55L433.6 67.05L436.30000000000007 63.74999999999999" fill="none" stroke="#fff" stroke-width="1.2" stroke-linecap="round" stroke-linejoin="round"/>
<path d="M447.9 61.65V67.85M457.3 61.65V67.85" stroke="#1f2a2a" stroke-width="0.9"/><rect x="446.5" y="67.05" width="12.2" height="3.6" rx="0.6" fill="#1d2626"/><path d="M447.9 68.85h1.4m1 0h1.4m1 0h1.4m1 0h1.4" stroke="#8aa" stroke-width="0.6"/>
<rect x="279.5" y="113.6" width="37.9" height="22.3" rx="0.8" fill="#74d5f3" stroke="#56c4e4" stroke-width="0.7"/>
<rect x="279.9" y="114.0" width="37.1" height="3" fill="#62c6ee"/>
<text x="298.45" y="116.19999999999999" font-size="1.9" fill="#456" opacity="0.45" text-anchor="middle">l1.company.com</text>
<circle cx="289.1" cy="125.75" r="4.6" fill="#3fc790" stroke="#d8f8e0" stroke-width="0.6"/><path d="M287.1 125.95L288.5 127.45L291.20000000000005 124.15" fill="none" stroke="#fff" stroke-width="1.2" stroke-linecap="round" stroke-linejoin="round"/>
<rect x="303.4" y="124.05000000000001" width="8" height="4.8" rx="0.4" fill="#8fb86a" stroke="#6a9a5a" stroke-width="0.4"/><path d="M302.2 129.55H312.59999999999997" stroke="#5a8a7a" stroke-width="0.9"/>
<rect x="333.1" y="113.6" width="37.9" height="22.3" rx="0.8" fill="#b4dcfa" stroke="#7f9fb8" stroke-width="0.7"/>
<rect x="333.5" y="114.0" width="37.1" height="3" fill="#98c0f2"/>
<text x="352.05" y="116.19999999999999" font-size="1.9" fill="#456" opacity="0.45" text-anchor="middle">l2.company.com</text>
<circle cx="342.70000000000005" cy="125.75" r="4.7" fill="#2a6a86" stroke="#cfe6f0" stroke-width="0.5"/><rect x="342.1" y="125.05" width="1.2" height="3" fill="#fff"/><circle cx="342.70000000000005" cy="123.75" r="0.75" fill="#fff"/>
<rect x="357.0" y="124.05000000000001" width="8" height="4.8" rx="0.4" fill="#d4a33c" stroke="#9a7a2a" stroke-width="0.4"/><path d="M355.8 129.55H366.2" stroke="#4a4a3a" stroke-width="0.9"/>
<rect x="386.4" y="113.6" width="37.9" height="22.3" rx="0.8" fill="#b4dcfa" stroke="#7f9fb8" stroke-width="0.7"/>
<rect x="386.79999999999995" y="114.0" width="37.1" height="3" fill="#98c0f2"/>
<text x="405.34999999999997" y="116.19999999999999" font-size="1.9" fill="#456" opacity="0.45" text-anchor="middle">l3.company.com</text>
<circle cx="396.0" cy="125.75" r="4.6" fill="#3fc45a" stroke="#d8f8e0" stroke-width="0.6"/><path d="M394.0 125.95L395.4 127.45L398.1 124.15" fill="none" stroke="#fff" stroke-width="1.2" stroke-linecap="round" stroke-linejoin="round"/>
<rect x="410.29999999999995" y="124.05000000000001" width="8" height="4.8" rx="0.4" fill="#d4a33c" stroke="#9a7a2a" stroke-width="0.4"/><path d="M409.09999999999997 129.55H419.49999999999994" stroke="#4a4a3a" stroke-width="0.9"/>
<rect x="477.2" y="113.6" width="37.9" height="22.3" rx="0.8" fill="#b6eef4" stroke="#94b4bc" stroke-width="0.7"/>
<rect x="477.59999999999997" y="114.0" width="37.1" height="3" fill="#b4c6dc"/>
<text x="496.15" y="116.19999999999999" font-size="1.9" fill="#456" opacity="0.45" text-anchor="middle">ph3.company.com</text>
<circle cx="486.8" cy="125.75" r="4.7" fill="#3a7a84" stroke="#cfe6f0" stroke-width="0.5"/><text x="486.8" y="127.85" font-size="6" font-weight="bold" fill="#fff" text-anchor="middle">?</text>
<rect x="501.7" y="120.85000000000001" width="6.8" height="11.8" rx="1" fill="#4a4434"/><rect x="502.49999999999994" y="122.25" width="5.2" height="8.2" fill="#d8a83c"/>
<g transform="translate(305.4,174.9)"><g clip-path="url(#cpn)"><rect width="45.7" height="37.8" fill="url(#gy)"/><rect y="34.599999999999994" width="45.7" height="3.2" fill="#d2b436"/></g><text x="22.85" y="22.0" font-size="7.4" font-weight="bold" fill="#fff" stroke="#fff" stroke-width="0.15" text-anchor="middle" style="text-shadow:0 0 1px rgba(255,255,255,.6)">Building A</text></g>
<g transform="translate(366.5,174.9)"><g clip-path="url(#cpn)"><rect width="45.7" height="37.8" fill="url(#gr)"/><rect y="34.599999999999994" width="45.7" height="3.2" fill="#8e4a26"/></g><text x="22.85" y="22.0" font-size="7.4" font-weight="bold" fill="#fff" stroke="#fff" stroke-width="0.15" text-anchor="middle" style="text-shadow:0 0 1px rgba(255,255,255,.6)">Building B</text></g>
<g transform="translate(428,174.9)"><g clip-path="url(#cpn)"><rect width="45.7" height="37.8" fill="url(#gr)"/><rect y="34.599999999999994" width="45.7" height="3.2" fill="#8e4a26"/></g><text x="22.85" y="22.0" font-size="7.4" font-weight="bold" fill="#fff" stroke="#fff" stroke-width="0.15" text-anchor="middle" style="text-shadow:0 0 1px rgba(255,255,255,.6)">Building C</text></g>
<g transform="translate(489.2,174.9)"><g clip-path="url(#cpn)"><rect width="45.7" height="37.8" fill="url(#go)"/><rect y="34.599999999999994" width="45.7" height="3.2" fill="#c27a22"/></g><text x="22.85" y="22.0" font-size="7.4" font-weight="bold" fill="#fff" stroke="#fff" stroke-width="0.15" text-anchor="middle" style="text-shadow:0 0 1px rgba(255,255,255,.6)">Building D</text></g>
<g transform="translate(550.5,174.9)"><g clip-path="url(#cpn)"><rect width="45.7" height="37.8" fill="url(#gg)"/><rect y="34.599999999999994" width="45.7" height="3.2" fill="#5a7a2c"/></g><text x="22.85" y="22.0" font-size="7.4" font-weight="bold" fill="#fff" stroke="#fff" stroke-width="0.15" text-anchor="middle" style="text-shadow:0 0 1px rgba(255,255,255,.6)">Site 2</text></g>
<g transform="translate(611.8,174.9)"><g clip-path="url(#cpn)"><rect width="45.7" height="37.8" fill="url(#gr)"/><rect y="34.599999999999994" width="45.7" height="3.2" fill="#8e4a26"/></g><text x="22.85" y="22.0" font-size="7.4" font-weight="bold" fill="#fff" stroke="#fff" stroke-width="0.15" text-anchor="middle" style="text-shadow:0 0 1px rgba(255,255,255,.6)">Building F</text></g>
<g transform="translate(673,174.9)"><g clip-path="url(#cpn)"><rect width="45.7" height="37.8" fill="url(#gy)"/><rect y="34.599999999999994" width="45.7" height="3.2" fill="#d8b436"/></g><text x="22.85" y="22.0" font-size="7.4" font-weight="bold" fill="#fff" stroke="#fff" stroke-width="0.15" text-anchor="middle" style="text-shadow:0 0 1px rgba(255,255,255,.6)">Site 4</text></g>
<g transform="translate(612,77.8)"><g clip-path="url(#cpn)"><rect width="45.7" height="37.8" fill="url(#gy)"/><rect y="34.599999999999994" width="45.7" height="3.2" fill="#e5b234"/></g><text x="22.85" y="22.0" font-size="7.4" font-weight="bold" fill="#fff" stroke="#fff" stroke-width="0.15" text-anchor="middle" style="text-shadow:0 0 1px rgba(255,255,255,.6)">Site 3</text></g>
<g transform="translate(550.6,228.3)"><g clip-path="url(#cpn)"><rect width="45.7" height="37.8" fill="#8d4b30"/><rect x="0" y="0" width="45.7" height="12" fill="url(#gbe)"/><rect x="8.8" y="3.4" width="32.4" height="32.2" fill="url(#gr)"/><rect x="8.8" y="1.6" width="32.4" height="2.6" fill="#b65a50" opacity="0.6"/></g><text x="22.85" y="22" font-size="7.4" font-weight="bold" fill="#ffe3ea" stroke="#ffe3ea" stroke-width="0.15" text-anchor="middle">Building E</text></g>
<g stroke="#8f8f8f" fill="none" stroke-width="0.8" stroke-linecap="round" stroke-linejoin="round"><circle cx="782" cy="50" r="11" fill="#f1f1f1" stroke="none"/><path d="M779.8 43L782 40.8L784.2 43"/><path d="M779.8 57L782 59.2L784.2 57"/><path d="M775 47.8L772.8 50L775 52.2"/><path d="M789 47.8L791.2 50L789 52.2"/><circle cx="782" cy="50" r="3.4" fill="#f8f8f8"/><circle cx="782" cy="50" r="1.4"/><circle cx="782" cy="71.4" r="6.6" fill="#f1f1f1" stroke="none"/><path d="M778.6 71.4H785.4M782 68V74.8" stroke="#6a6a6a" stroke-width="1"/><circle cx="782" cy="88" r="6.6" fill="#f1f1f1" stroke="none"/><path d="M778.6 88H785.4" stroke="#7a7a7a" stroke-width="1.1"/><circle cx="782" cy="104.8" r="6.6" fill="#f1f1f1" stroke="none"/><path d="M779 103.4V102H780.4M783.6 102H785V103.4M785 106.2V107.6H783.6M780.4 107.6H779V106.2" stroke="#9a9a9a" stroke-width="0.8"/></g>
</svg>
<div style="left:707.2px;top:129.6px;width:347.6px;height:710px;border:13px solid #4e8a30;"></div>
<div style="left:815.2px;top:450.4px;width:197.6px;height:46.4px;background:#f4f4f4;border:2.8px solid #c4c4c4;border-radius:4.8px;box-shadow:0 2px 6px rgba(0,0,0,.25);"></div>
<div class="t" style="left:832px;top:453.2px;color:#1a1a1a;font-size:26.6px">Create Switch</div>
<div class="tabbg l" style="left:8px;top:1136px;width:112px;"></div><div class="tab" style="left:8px;top:1136px;width:112px;">Details</div>
<div class="tabbg l" style="left:764px;top:1136px;width:192px;"></div><div class="tab" style="left:764px;top:1136px;width:192px;">Device Table</div>
<div class="tabbg g" style="left:964px;top:1136px;width:242px;"></div><div class="tab" style="left:964px;top:1136px;width:242px;">Connection Table</div>
<div id="details" style="left:0;top:1180px;width:738px;height:480px;background:#fff;border-left:4px solid #d4d4d4;border-right:4px solid #cfcfcf;overflow:hidden;">
<div style="left:0;top:1.6px;width:736px;height:52.8px;background:#dfdfdf;"></div>
<div style="left:366.4px;top:1.6px;width:2.8px;height:444px;background:#cfcfcf"></div>
<div class="t" style="left:4.4px;top:8.4px;font-size:27.4px;">Attribute</div>
<div class="t" style="left:369.6px;top:8.4px;font-size:27.4px;">Value</div>
<div class="t" style="left:4.4px;top:58.2px;font-size:27.4px;">ID</div>
<div class="t" style="left:369.6px;top:58.2px;font-size:27.4px;">76</div>
<div style="left:0;top:101.2px;width:736px;height:3.2px;background:#dcdcdc"></div>
<div class="t" style="left:4.4px;top:107.6px;font-size:27.4px;">Host Name</div>
<div class="t" style="left:369.6px;top:107.6px;font-size:27.4px;">l1.company.com</div>
<div style="left:0;top:150.6px;width:736px;height:3.2px;background:#dcdcdc"></div>
<div class="t" style="left:4.4px;top:157px;font-size:27.4px;">Device Type</div>
<div class="t" style="left:369.6px;top:157px;font-size:27.4px;">Laptop</div>
<div style="left:0;top:200px;width:736px;height:3.2px;background:#dcdcdc"></div>
<div class="t" style="left:4.4px;top:206.4px;font-size:27.4px;">IP Address</div>
<div class="t" style="left:369.6px;top:206.4px;font-size:27.4px;">99.99.10.76</div>
<div style="left:0;top:249.4px;width:736px;height:3.2px;background:#dcdcdc"></div>
<div class="t" style="left:4.4px;top:255.8px;font-size:27.4px;">Location</div>
<div class="t" style="left:369.6px;top:255.8px;font-size:27.4px;">Site 1</div>
<div style="left:0;top:298.8px;width:736px;height:3.2px;background:#dcdcdc"></div>
<div class="t" style="left:4.4px;top:305.2px;font-size:27.4px;">Region</div>
<div class="t" style="left:369.6px;top:305.2px;font-size:27.4px;">East</div>
<div style="left:0;top:348.2px;width:736px;height:3.2px;background:#dcdcdc"></div>
<div class="t" style="left:4.4px;top:354.6px;font-size:27.4px;">Status</div>
<div class="t" style="left:369.6px;top:354.6px;font-size:27.4px;">OK</div>
<div style="left:0;top:397.6px;width:736px;height:3.2px;background:#dcdcdc"></div>
<div class="t" style="left:4.4px;top:404px;font-size:27.4px;">Custom Group</div>
<div class="t" style="left:369.6px;top:404px;font-size:27.4px;">None</div>
<div style="left:0;top:447px;width:736px;height:3.2px;background:#dcdcdc"></div>
</div>
<div id="devices" style="left:756.8px;top:1180px;width:2443.2px;height:480px;background:#fff;border-left:2.4px solid #c8c8c8;overflow:hidden;">
<div style="left:0;top:0;width:2440px;height:56.8px;background:linear-gradient(#e0e0e0 0,#dedede 68%,#d7e4da 80%,#d7e4da 100%);border-top:4px solid #d2d2d2;"></div>
<div class="t" style="left:6.8px;top:13.2px;font-size:27.4px;">Host Name</div>
<div class="t" style="left:565.6px;top:13.2px;font-size:27.4px;">Type</div>
<div class="t" style="left:946.4px;top:13.2px;font-size:27.4px;">IP Address</div>
<div class="t" style="left:1282.4px;top:13.2px;font-size:27.4px;">Location</div>
<div class="t" style="left:1576.4px;top:13.2px;font-size:27.4px;">Status</div>
<div class="t" style="left:1819.2px;top:13.2px;font-size:27.4px;">Status Value</div>
<div class="t" style="left:2112px;top:13.2px;font-size:27.4px;">ID</div>
<div style="left:0;top:58.8px;width:2440px;height:50.6px;background:#bffbfb;"></div>
<div class="t" style="left:6.8px;top:63.6px;font-size:27.4px;">l1.company.com</div>
<div class="t" style="left:565.6px;top:63.6px;font-size:27.4px;">Laptop</div>
<div class="t" style="left:946.4px;top:63.6px;font-size:27.4px;">99.99.10.76</div>
<div class="t" style="left:1282.4px;top:63.6px;font-size:27.4px;">Site 1</div>
<div style="left:1576.4px;top:70.4px;width:229.6px;height:24px;background:linear-gradient(90deg,#6f9a30 0,#3a9f2e 22%,#2f9e2e 100%);border:3px solid #1d5a22;"></div>
<div class="t" style="left:1819.2px;top:63.6px;font-size:27.4px;">OK</div>
<div class="t" style="left:2112px;top:63.6px;font-size:27.4px;">76</div>
<div style="left:0;top:108.2px;width:2440px;height:50.6px;background:#ffffff;"></div>
<div class="t" style="left:6.8px;top:113px;font-size:27.4px;">l2.company.com</div>
<div class="t" style="left:565.6px;top:113px;font-size:27.4px;">Laptop</div>
<div class="t" style="left:946.4px;top:113px;font-size:27.4px;">99.99.10.77</div>
<div class="t" style="left:1282.4px;top:113px;font-size:27.4px;">Site 1</div>
<div style="left:1576.4px;top:119.8px;width:229.6px;height:24px;background:linear-gradient(90deg,#8a98f4,#94a2fa);border:3px solid #2c3c70;"></div>
<div class="t" style="left:1819.2px;top:113px;font-size:27.4px;">Information</div>
<div class="t" style="left:2112px;top:113px;font-size:27.4px;">77</div>
<div style="left:0;top:157.6px;width:2440px;height:50.6px;background:#dae3db;"></div>
<div class="t" style="left:6.8px;top:162.4px;font-size:27.4px;">l3.company.com</div>
<div class="t" style="left:565.6px;top:162.4px;font-size:27.4px;">Laptop</div>
<div class="t" style="left:946.4px;top:162.4px;font-size:27.4px;">99.99.10.78</div>
<div class="t" style="left:1282.4px;top:162.4px;font-size:27.4px;">Site 1</div>
<div style="left:1576.4px;top:169.2px;width:229.6px;height:24px;background:linear-gradient(90deg,#6f9a30 0,#3a9f2e 22%,#2f9e2e 100%);border:3px solid #1d5a22;"></div>
<div class="t" style="left:1819.2px;top:162.4px;font-size:27.4px;">OK</div>
<div class="t" style="left:2112px;top:162.4px;font-size:27.4px;">78</div>
<div style="left:0;top:207px;width:2440px;height:50.6px;background:#ffffff;"></div>
<div style="left:1550.8px;top:207px;width:252px;height:50.6px;background:#e2fff8;"></div>
<div class="t" style="left:6.8px;top:211.8px;font-size:27.4px;">ph1.company.com</div>
<div class="t" style="left:565.6px;top:211.8px;font-size:27.4px;">Phone</div>
<div class="t" style="left:946.4px;top:211.8px;font-size:27.4px;">99.99.10.79</div>
<div class="t" style="left:1282.4px;top:211.8px;font-size:27.4px;">Site 2</div>
<div style="left:1576.4px;top:218.6px;width:229.6px;height:24px;background:linear-gradient(90deg,#6f9a30 0,#3a9f2e 22%,#2f9e2e 100%);border:3px solid #1d5a22;"></div>
<div class="t" style="left:1819.2px;top:211.8px;font-size:27.4px;">OK</div>
<div class="t" style="left:2112px;top:211.8px;font-size:27.4px;">79</div>
<div style="left:0;top:256.4px;width:2440px;height:50.6px;background:#dae3db;"></div>
<div style="left:1550.8px;top:256.4px;width:252px;height:50.6px;background:#f0d8d2;"></div>
<div class="t" style="left:6.8px;top:261.2px;font-size:27.4px;">ph2.company.com</div>
<div class="t" style="left:565.6px;top:261.2px;font-size:27.4px;">Phone</div>
<div class="t" style="left:946.4px;top:261.2px;font-size:27.4px;">99.99.10.80</div>
<div class="t" style="left:1282.4px;top:261.2px;font-size:27.4px;">Site 3</div>
<div style="left:1576.4px;top:268px;width:229.6px;height:24px;background:linear-gradient(90deg,#d2ca3c 0,#eadc42 25%,#f0d840 100%);border:3px solid #5a4a2a;"></div>
<div class="t" style="left:1819.2px;top:261.2px;font-size:27.4px;">Warning</div>
<div class="t" style="left:2112px;top:261.2px;font-size:27.4px;">80</div>
<div style="left:0;top:305.8px;width:2440px;height:50.6px;background:#ffffff;"></div>
<div style="left:1550.8px;top:305.8px;width:252px;height:50.6px;background:#e2fff8;"></div>
<div class="t" style="left:6.8px;top:310.6px;font-size:27.4px;">s1.company.com</div>
<div class="t" style="left:565.6px;top:310.6px;font-size:27.4px;">Workstation</div>
<div class="t" style="left:946.4px;top:310.6px;font-size:27.4px;">99.99.10.81</div>
<div class="t" style="left:1282.4px;top:310.6px;font-size:27.4px;">Site 4</div>
<div style="left:1576.4px;top:317.4px;width:229.6px;height:24px;background:linear-gradient(90deg,#6f9a30 0,#3a9f2e 22%,#2f9e2e 100%);border:3px solid #1d5a22;"></div>
<div class="t" style="left:1819.2px;top:310.6px;font-size:27.4px;">OK</div>
<div class="t" style="left:2112px;top:310.6px;font-size:27.4px;">81</div>
<div style="left:0;top:355.2px;width:2440px;height:50.6px;background:#dae3db;"></div>
<div style="left:1550.8px;top:355.2px;width:252px;height:50.6px;background:#c0f9e6;"></div>
<div class="t" style="left:6.8px;top:360px;font-size:27.4px;">routerD.company.com</div>
<div class="t" style="left:565.6px;top:360px;font-size:27.4px;">Router</div>
<div class="t" style="left:946.4px;top:360px;font-size:27.4px;">99.99.10.82</div>
<div class="t" style="left:1282.4px;top:360px;font-size:27.4px;">Site 4</div>
<div style="left:1576.4px;top:366.8px;width:229.6px;height:24px;background:linear-gradient(90deg,#6f9a30 0,#3a9f2e 22%,#2f9e2e 100%);border:3px solid #1d5a22;"></div>
<div class="t" style="left:1819.2px;top:360px;font-size:27.4px;">OK</div>
<div class="t" style="left:2112px;top:360px;font-size:27.4px;">82</div>
<div style="left:0;top:404.6px;width:2440px;height:50.6px;background:#ffffff;"></div>
<div style="left:1550.8px;top:404.6px;width:252px;height:50.6px;background:#e2fff8;"></div>
<div class="t" style="left:6.8px;top:409.4px;font-size:27.4px;">l4.company.com</div>
<div class="t" style="left:565.6px;top:409.4px;font-size:27.4px;">Laptop</div>
<div class="t" style="left:946.4px;top:409.4px;font-size:27.4px;">99.99.10.83</div>
<div class="t" style="left:1282.4px;top:409.4px;font-size:27.4px;">Site 4</div>
<div style="left:1576.4px;top:416.2px;width:229.6px;height:24px;background:linear-gradient(90deg,#6f9a30 0,#3a9f2e 22%,#2f9e2e 100%);border:3px solid #1d5a22;"></div>
<div class="t" style="left:1819.2px;top:409.4px;font-size:27.4px;">OK</div>
<div class="t" style="left:2112px;top:409.4px;font-size:27.4px;">83</div>
<div style="left:0;top:454px;width:2440px;height:50.6px;background:#dae3db;"></div>
<div class="t" style="left:6.8px;top:458.8px;font-size:27.4px;">ph3.company.com</div>
<div class="t" style="left:565.6px;top:458.8px;font-size:27.4px;">Phone</div>
<div class="t" style="left:946.4px;top:458.8px;font-size:27.4px;">99.99.10.84</div>
<div class="t" style="left:1282.4px;top:458.8px;font-size:27.4px;">Site 1</div>
<div style="left:1576.4px;top:465.6px;width:229.6px;height:24px;background:#c9c9c9;border:3px solid #555;"></div>
<div class="t" style="left:1819.2px;top:458.8px;font-size:27.4px;">Unknown</div>
<div class="t" style="left:2112px;top:458.8px;font-size:27.4px;">84</div>
<div style="left:558.8px;top:4px;width:3.2px;height:476px;background:rgba(150,160,150,0.45)"></div>
<div style="left:939.6px;top:4px;width:3.2px;height:476px;background:rgba(150,160,150,0.45)"></div>
<div style="left:1275.6px;top:4px;width:3.2px;height:476px;background:rgba(150,160,150,0.45)"></div>
<div style="left:1569.6px;top:4px;width:3.2px;height:476px;background:rgba(150,160,150,0.45)"></div>
<div style="left:1812.4px;top:4px;width:3.2px;height:476px;background:rgba(150,160,150,0.45)"></div>
<div style="left:2105.2px;top:4px;width:3.2px;height:476px;background:rgba(150,160,150,0.45)"></div>
<div style="left:0;top:57.2px;width:2440px;height:3.2px;background:#c2d4f0"></div>
<div style="left:0;top:106.6px;width:2440px;height:3.2px;background:#c2d4f0"></div>
<div style="left:0;top:57.6px;width:2440px;height:2.4px;background:rgba(170,180,175,0.35)"></div>
<div style="left:0;top:107px;width:2440px;height:2.4px;background:rgba(170,180,175,0.35)"></div>
<div style="left:0;top:156.4px;width:2440px;height:2.4px;background:rgba(170,180,175,0.35)"></div>
<div style="left:0;top:205.8px;width:2440px;height:2.4px;background:rgba(170,180,175,0.35)"></div>
<div style="left:0;top:255.2px;width:2440px;height:2.4px;background:rgba(170,180,175,0.35)"></div>
<div style="left:0;top:304.6px;width:2440px;height:2.4px;background:rgba(170,180,175,0.35)"></div>
<div style="left:0;top:354px;width:2440px;height:2.4px;background:rgba(170,180,175,0.35)"></div>
<div style="left:0;top:403.4px;width:2440px;height:2.4px;background:rgba(170,180,175,0.35)"></div>
<div style="left:0;top:452.8px;width:2440px;height:2.4px;background:rgba(170,180,175,0.35)"></div>
<div style="left:0;top:502.2px;width:2440px;height:2.4px;background:rgba(170,180,175,0.35)"></div>
</div>
</div></div></body></html>
